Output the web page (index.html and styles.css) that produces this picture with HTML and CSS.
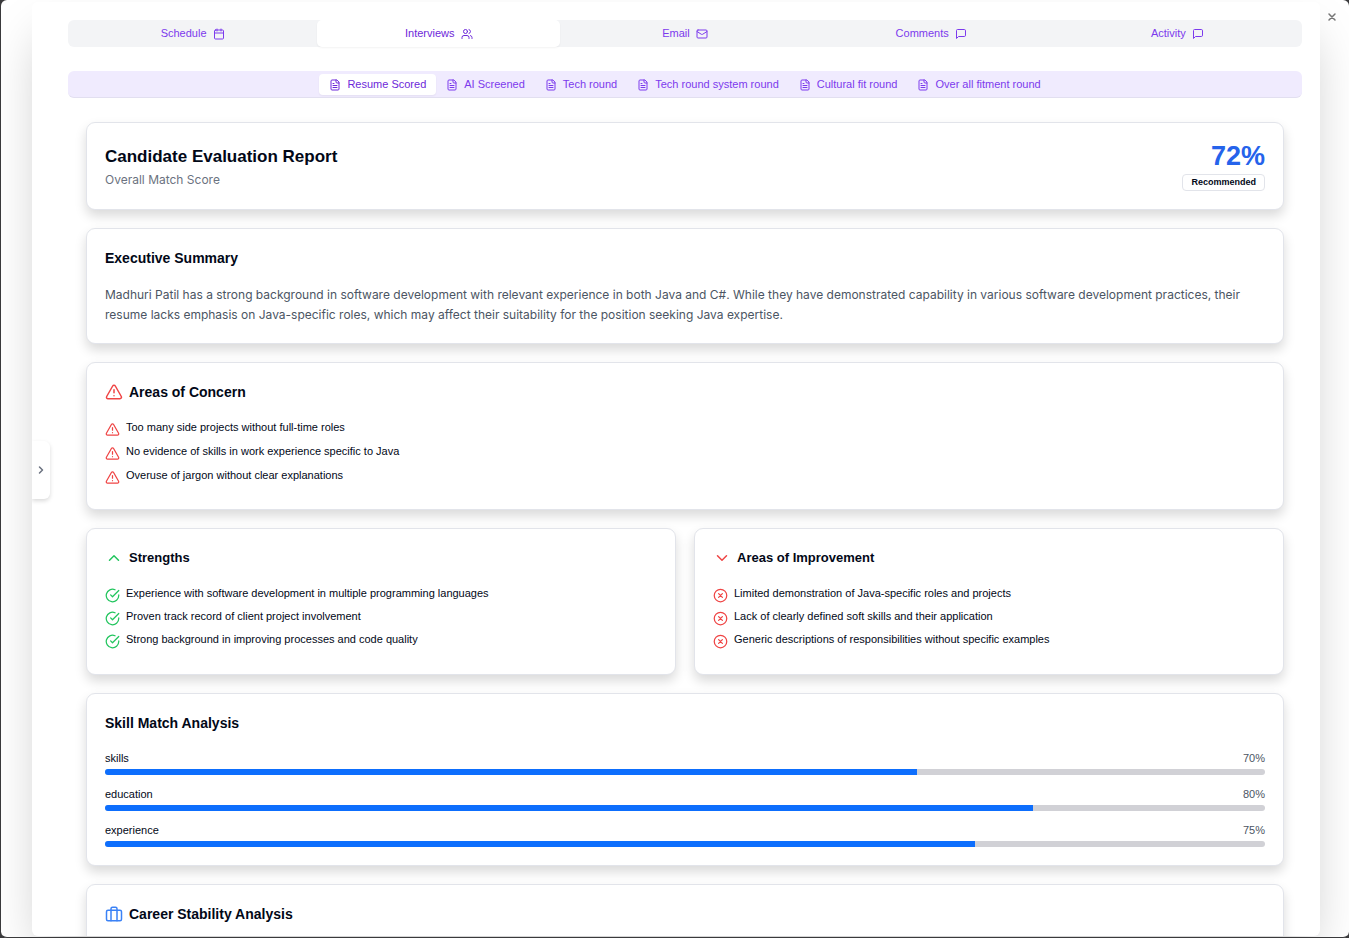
FILE: index.html
```
<!DOCTYPE html>
<html lang="en">
<head>
<meta charset="utf-8">
<meta name="viewport" content="width=device-width, initial-scale=1">
<title>Candidate Evaluation Report</title>
<link rel="stylesheet" href="styles.css">
</head>
<body>
<svg class="sprite" aria-hidden="true">
  <symbol id="calendar" viewBox="0 0 24 24"><path d="M8 2v4M16 2v4M3 10h18"/><rect x="3" y="4" width="18" height="18" rx="2"/></symbol>
  <symbol id="users" viewBox="0 0 24 24"><path d="M16 21v-2a4 4 0 0 0-4-4H6a4 4 0 0 0-4 4v2"/><circle cx="9" cy="7" r="4"/><path d="M22 21v-2a4 4 0 0 0-3-3.87M16 3.13a4 4 0 0 1 0 7.75"/></symbol>
  <symbol id="mail" viewBox="0 0 24 24"><rect x="2" y="4" width="20" height="16" rx="2"/><path d="m22 7-8.97 5.7a1.94 1.94 0 0 1-2.06 0L2 7"/></symbol>
  <symbol id="message" viewBox="0 0 24 24"><path d="M21 15a2 2 0 0 1-2 2H7l-4 4V5a2 2 0 0 1 2-2h14a2 2 0 0 1 2 2z"/></symbol>
  <symbol id="file" viewBox="0 0 24 24"><path d="M15 2H6a2 2 0 0 0-2 2v16a2 2 0 0 0 2 2h12a2 2 0 0 0 2-2V7Z"/><path d="M14 2v4a2 2 0 0 0 2 2h4M10 9H8M16 13H8M16 17H8"/></symbol>
  <symbol id="alert" viewBox="0 0 24 24"><path d="m21.73 18-8-14a2 2 0 0 0-3.48 0l-8 14A2 2 0 0 0 4 21h16a2 2 0 0 0 1.73-3M12 9v4M12 17h.01"/></symbol>
  <symbol id="check" viewBox="0 0 24 24"><path d="M22 11.08V12a10 10 0 1 1-5.93-9.14"/><path d="m9 11 3 3L22 4"/></symbol>
  <symbol id="cross" viewBox="0 0 24 24"><circle cx="12" cy="12" r="10"/><path d="m15 9-6 6M9 9l6 6"/></symbol>
  <symbol id="up" viewBox="0 0 24 24"><path d="m18 15-6-6-6 6"/></symbol>
  <symbol id="down" viewBox="0 0 24 24"><path d="m6 9 6 6 6-6"/></symbol>
  <symbol id="right" viewBox="0 0 24 24"><path d="m9 18 6-6-6-6"/></symbol>
  <symbol id="close" viewBox="0 0 24 24"><path d="M18 6 6 18M6 6l12 12"/></symbol>
  <symbol id="briefcase" viewBox="0 0 24 24"><path d="M16 21V5a2 2 0 0 0-2-2h-4a2 2 0 0 0-2 2v16"/><rect x="2" y="7" width="20" height="14" rx="2"/></symbol>
</svg>
<div class="dialog">
  <button class="close" aria-label="Close"><svg class="icon"><use href="#close"/></svg></button>
  <main class="panel">
    <button class="handle" aria-label="Expand"><svg class="icon"><use href="#right"/></svg></button>
    <nav class="tabs" aria-label="Sections">
      <button class="tab">Schedule <svg class="icon"><use href="#calendar"/></svg></button>
      <button class="tab active">Interviews <svg class="icon"><use href="#users"/></svg></button>
      <button class="tab">Email <svg class="icon"><use href="#mail"/></svg></button>
      <button class="tab">Comments <svg class="icon"><use href="#message"/></svg></button>
      <button class="tab">Activity <svg class="icon"><use href="#message"/></svg></button>
    </nav>
    <nav class="rounds" aria-label="Interview rounds">
      <button class="round active"><svg class="icon"><use href="#file"/></svg> Resume Scored</button>
      <button class="round"><svg class="icon"><use href="#file"/></svg> AI Screened</button>
      <button class="round"><svg class="icon"><use href="#file"/></svg> Tech round</button>
      <button class="round"><svg class="icon"><use href="#file"/></svg> Tech round system round</button>
      <button class="round"><svg class="icon"><use href="#file"/></svg> Cultural fit round</button>
      <button class="round"><svg class="icon"><use href="#file"/></svg> Over all fitment round</button>
    </nav>
    <div class="report">
      <section class="card overview">
        <div>
          <h1>Candidate Evaluation Report</h1>
          <p class="subtitle">Overall Match Score</p>
        </div>
        <div class="result">
          <span class="score">72%</span>
          <span class="badge">Recommended</span>
        </div>
      </section>
      <section class="card">
        <h2>Executive Summary</h2>
        <p class="summary">Madhuri Patil has a strong background in software development with relevant experience in both Java and C#. While they have demonstrated capability in various software development practices, their resume lacks emphasis on Java-specific roles, which may affect their suitability for the position seeking Java expertise.</p>
      </section>
      <section class="card">
        <h2><svg class="icon red"><use href="#alert"/></svg>Areas of Concern</h2>
        <ul class="points">
          <li><svg class="icon red"><use href="#alert"/></svg>Too many side projects without full-time roles</li>
          <li><svg class="icon red"><use href="#alert"/></svg>No evidence of skills in work experience specific to Java</li>
          <li><svg class="icon red"><use href="#alert"/></svg>Overuse of jargon without clear explanations</li>
        </ul>
      </section>
      <div class="pair">
        <section class="card">
          <h3><svg class="icon green"><use href="#up"/></svg>Strengths</h3>
          <ul class="points">
            <li><svg class="icon green"><use href="#check"/></svg>Experience with software development in multiple programming languages</li>
            <li><svg class="icon green"><use href="#check"/></svg>Proven track record of client project involvement</li>
            <li><svg class="icon green"><use href="#check"/></svg>Strong background in improving processes and code quality</li>
          </ul>
        </section>
        <section class="card">
          <h3><svg class="icon red"><use href="#down"/></svg>Areas of Improvement</h3>
          <ul class="points">
            <li><svg class="icon red"><use href="#cross"/></svg>Limited demonstration of Java-specific roles and projects</li>
            <li><svg class="icon red"><use href="#cross"/></svg>Lack of clearly defined soft skills and their application</li>
            <li><svg class="icon red"><use href="#cross"/></svg>Generic descriptions of responsibilities without specific examples</li>
          </ul>
        </section>
      </div>
      <section class="card">
        <h2>Skill Match Analysis</h2>
        <div class="skills">
          <div class="skill">
            <div class="skill-label"><span>skills</span><span class="percent">70%</span></div>
            <div class="track"><div class="fill" style="width:70%"></div></div>
          </div>
          <div class="skill">
            <div class="skill-label"><span>education</span><span class="percent">80%</span></div>
            <div class="track"><div class="fill" style="width:80%"></div></div>
          </div>
          <div class="skill">
            <div class="skill-label"><span>experience</span><span class="percent">75%</span></div>
            <div class="track"><div class="fill" style="width:75%"></div></div>
          </div>
        </div>
      </section>
      <section class="card">
        <h2><svg class="icon blue"><use href="#briefcase"/></svg>Career Stability Analysis</h2>
      </section>
    </div>
  </main>
</div>
</body>
</html>
```
FILE: styles.css
```
* { box-sizing: border-box; }
body {
  margin: 0;
  background: #3a3a3c;
  color: #020817;
  font: 11px/16px "Liberation Sans", Arial, sans-serif;
}
h1, h2, h3, p, ul { margin: 0; padding: 0; }
button {
  border: 0;
  padding: 0;
  background: none;
  color: inherit;
  font: inherit;
  cursor: pointer;
}
.sprite { display: none; }
.icon {
  flex: none;
  width: 12px;
  height: 12px;
  fill: none;
  stroke: currentColor;
  stroke-width: 2;
  stroke-linecap: round;
  stroke-linejoin: round;
}
.red { color: #ef4444; }
.green { color: #22c55e; }
.blue { color: #3b82f6; }

.dialog {
  position: relative;
  display: flex;
  height: 100vh;
  padding: 2px 29px 1px 31px;
  border-bottom: 1px solid #3a3a3c;
  margin-left: 1px;
  border-radius: 6px;
  background: #fff;
  overflow: hidden;
}
.close {
  position: absolute;
  top: 11px;
  right: 11px;
  width: 12px;
  height: 12px;
  color: #777;
}
.close .icon { display: block; stroke-width: 3; }
.panel {
  position: relative;
  flex: 1;
  min-width: 0;
  padding: 18px 18px 0 36px;
  border-radius: 6px;
  background: #fff;
  box-shadow: 0 25px 50px -12px rgba(0, 0, 0, .25);
  overflow: hidden;
}
.handle {
  position: absolute;
  left: 0;
  top: 47%;
  display: flex;
  align-items: center;
  justify-content: center;
  width: 18px;
  height: 58px;
  border-radius: 0 6px 6px 0;
  background: #fff;
  color: #6b7280;
  box-shadow: 0 2px 4px rgba(0, 0, 0, .15);
}
.handle .icon { stroke-width: 3; }

.tabs {
  display: grid;
  grid-template-columns: repeat(5, 1fr);
  gap: 3px;
  padding: 0 3px;
  border-radius: 6px;
  background: #f3f4f6;
  color: #7c3aed;
}
.tab {
  display: flex;
  align-items: center;
  justify-content: center;
  gap: 6px;
  height: 27px;
  border-radius: 5px;
  line-height: 15px;
}
.tab.active, .round.active {
  background: #fff;
  color: #6d28d9;
  box-shadow: 0 1px 2px rgba(0, 0, 0, .05);
}
.rounds {
  display: flex;
  justify-content: center;
  margin-top: 24px;
  padding: 3px 0 2px;
  border-bottom: 1px solid #e2dff0;
  border-radius: 6px;
  background: #f0ebfe;
  color: #7c3aed;
}
.round {
  display: flex;
  align-items: center;
  gap: 6px;
  height: 21px;
  padding: 0 10px;
  border-radius: 4px;
  line-height: 15px;
}

.report {
  display: flex;
  flex-direction: column;
  gap: 18px;
  padding: 24px 18px 18px;
}
.card {
  padding: 18px;
  border: 1px solid #e2e4ea;
  border-radius: 9px;
  background: #fff;
  box-shadow: 0 6px 12px rgba(0, 0, 0, .15);
}
.pair {
  display: grid;
  grid-template-columns: 1fr 1fr;
  gap: 18px;
}
.overview {
  display: flex;
  align-items: center;
  justify-content: space-between;
}
h1 { font-size: 17px; line-height: 27px; }
h2, h3 {
  display: flex;
  align-items: center;
  gap: 6px;
  margin-bottom: 16px;
  font-size: 14px;
  line-height: 22px;
}
h3 {
  margin-bottom: 17px;
  font-size: 13px;
  line-height: 21px;
}
h2 .icon, h3 .icon { width: 18px; height: 18px; }
.subtitle, .summary {
  font: 12px/20px Inter, sans-serif;
  color: #6b7280;
}
.summary { color: #4b5563; }
.result {
  display: flex;
  flex-direction: column;
  align-items: flex-end;
  gap: 3px;
}
.score {
  color: #2563eb;
  font-size: 27px;
  font-weight: 700;
  line-height: 30px;
}
.badge {
  padding: 0 8px;
  border: 1px solid #e2e4ea;
  border-radius: 4px;
  font-size: 9px;
  font-weight: 700;
  line-height: 15px;
}
.points {
  display: grid;
  gap: 6px;
  padding-bottom: 6px;
  list-style: none;
}
.pair .points { gap: 5px; padding-bottom: 7px; }
.points li {
  display: flex;
  gap: 6px;
}
.points .icon { width: 15px; height: 15px; margin-top: 3px; }
.skills { display: grid; gap: 11px; }
.skill { display: grid; gap: 3px; }
.skill-label { display: flex; justify-content: space-between; }
.percent { color: #4b5563; }
.track {
  height: 6px;
  border-radius: 3px;
  background: #d1d1d6;
  overflow: hidden;
}
.fill { height: 100%; background: #0d6efd; }
```
